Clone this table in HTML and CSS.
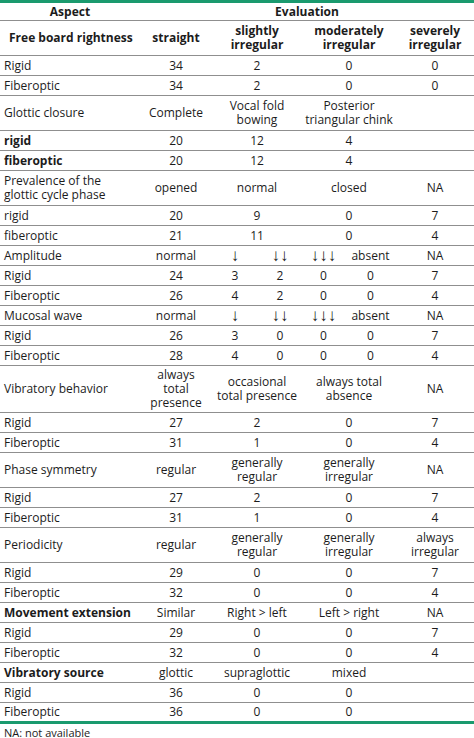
FILE: index.html
```html
<!DOCTYPE html>
<html>
<head>
<meta charset="utf-8">
<link rel="stylesheet" href="styles.css">
</head>
<body>
<div class="wrap">
<table class="tbl">
<colgroup>
<col class="c1"><col class="c2"><col class="ca"><col class="cb"><col class="cc"><col class="cd"><col class="ce">
</colgroup>
<thead>
<tr class="h1"><th class="asp">Aspect</th><th colspan="6">Evaluation</th></tr>
<tr class="h2"><th class="lbl">Free board rightness</th><th>straight</th><th colspan="2">slightly<br>irregular</th><th colspan="2">moderately<br>irregular</th><th>severely<br>irregular</th></tr>
</thead>
<tbody>
<tr class="s"><td class="lbl">Rigid</td><td>34</td><td colspan="2">2</td><td colspan="2">0</td><td>0</td></tr>
<tr class="s"><td class="lbl">Fiberoptic</td><td>34</td><td colspan="2">2</td><td colspan="2">0</td><td>0</td></tr>
<tr class="d"><td class="lbl">Glottic closure</td><td>Complete</td><td colspan="2">Vocal fold<br>bowing</td><td colspan="2">Posterior<br>triangular chink</td><td></td></tr>
<tr class="s"><td class="lbl b">rigid</td><td>20</td><td colspan="2">12</td><td colspan="2">4</td><td></td></tr>
<tr class="s"><td class="lbl b">fiberoptic</td><td>20</td><td colspan="2">12</td><td colspan="2">4</td><td></td></tr>
<tr class="d"><td class="lbl">Prevalence of the<br>glottic cycle phase</td><td>opened</td><td colspan="2">normal</td><td colspan="2">closed</td><td>NA</td></tr>
<tr class="s"><td class="lbl">rigid</td><td>20</td><td colspan="2">9</td><td colspan="2">0</td><td>7</td></tr>
<tr class="s"><td class="lbl">fiberoptic</td><td>21</td><td colspan="2">11</td><td colspan="2">0</td><td>4</td></tr>
<tr class="s"><td class="lbl">Amplitude</td><td>normal</td><td class="ar">↓</td><td class="ar">↓↓</td><td class="ar">↓↓↓</td><td>absent</td><td>NA</td></tr>
<tr class="s"><td class="lbl">Rigid</td><td>24</td><td>3</td><td>2</td><td>0</td><td>0</td><td>7</td></tr>
<tr class="s"><td class="lbl">Fiberoptic</td><td>26</td><td>4</td><td>2</td><td>0</td><td>0</td><td>4</td></tr>
<tr class="s"><td class="lbl">Mucosal wave</td><td>normal</td><td class="ar">↓</td><td class="ar">↓↓</td><td class="ar">↓↓↓</td><td>absent</td><td>NA</td></tr>
<tr class="s"><td class="lbl">Rigid</td><td>26</td><td>3</td><td>0</td><td>0</td><td>0</td><td>7</td></tr>
<tr class="s"><td class="lbl">Fiberoptic</td><td>28</td><td>4</td><td>0</td><td>0</td><td>0</td><td>4</td></tr>
<tr class="t"><td class="lbl">Vibratory behavior</td><td>always<br>total<br>presence</td><td colspan="2">occasional<br>total presence</td><td colspan="2">always total<br>absence</td><td>NA</td></tr>
<tr class="s"><td class="lbl">Rigid</td><td>27</td><td colspan="2">2</td><td colspan="2">0</td><td>7</td></tr>
<tr class="s"><td class="lbl">Fiberoptic</td><td>31</td><td colspan="2">1</td><td colspan="2">0</td><td>4</td></tr>
<tr class="d"><td class="lbl">Phase symmetry</td><td>regular</td><td colspan="2">generally<br>regular</td><td colspan="2">generally<br>irregular</td><td>NA</td></tr>
<tr class="s"><td class="lbl">Rigid</td><td>27</td><td colspan="2">2</td><td colspan="2">0</td><td>7</td></tr>
<tr class="s"><td class="lbl">Fiberoptic</td><td>31</td><td colspan="2">1</td><td colspan="2">0</td><td>4</td></tr>
<tr class="d"><td class="lbl">Periodicity</td><td>regular</td><td colspan="2">generally<br>regular</td><td colspan="2">generally<br>irregular</td><td>always<br>irregular</td></tr>
<tr class="s"><td class="lbl">Rigid</td><td>29</td><td colspan="2">0</td><td colspan="2">0</td><td>7</td></tr>
<tr class="s"><td class="lbl">Fiberoptic</td><td>32</td><td colspan="2">0</td><td colspan="2">0</td><td>4</td></tr>
<tr class="s"><td class="lbl b">Movement extension</td><td>Similar</td><td colspan="2">Right &gt; left</td><td colspan="2">Left &gt; right</td><td>NA</td></tr>
<tr class="s"><td class="lbl">Rigid</td><td>29</td><td colspan="2">0</td><td colspan="2">0</td><td>7</td></tr>
<tr class="s"><td class="lbl">Fiberoptic</td><td>32</td><td colspan="2">0</td><td colspan="2">0</td><td>4</td></tr>
<tr class="s"><td class="lbl b">Vibratory source</td><td>glottic</td><td colspan="2">supraglottic</td><td colspan="2">mixed</td><td></td></tr>
<tr class="s"><td class="lbl">Rigid</td><td>36</td><td colspan="2">0</td><td colspan="2">0</td><td></td></tr>
<tr class="s last"><td class="lbl">Fiberoptic</td><td>36</td><td colspan="2">0</td><td colspan="2">0</td><td></td></tr>
</tbody>
</table>
<p class="note">NA: not available</p>
</div>
</body>
</html>
```
FILE: styles.css
```css
html, body {
  margin: 0;
  padding: 0;
  background: #ffffff;
}
.wrap {
  width: 474px;
  font-family: "Open Sans", "Noto Sans", sans-serif;
  color: #1c1c1c;
  font-size: 12px;
}
.tbl {
  width: 474px;
  border-collapse: collapse;
  table-layout: fixed;
  border-top: 3px solid #1a9a6e;
  border-bottom: 3px solid #1a9a6e;
}
.c1 { width: 140px; }
.c2 { width: 72px; }
.ca { width: 46px; }
.cb { width: 44px; }
.cc { width: 43px; }
.cd { width: 51px; }
.ce { width: 78px; }
th, td {
  padding: 0 2px;
  text-align: center;
  vertical-align: middle;
  line-height: 14px;
  border-bottom: 1px solid #8f8f8f;
  white-space: nowrap;
}
th { font-weight: 700; }
.lbl { text-align: left; padding-left: 4px; }
.asp { text-align: center; }
.b { font-weight: 700; }
.ar {
  font-family: "Liberation Sans", "DejaVu Sans", sans-serif;
  font-size: 17px;
  letter-spacing: 0;
}
.h1 { height: 19px; }
.h2 { height: 35px; }
.h2 .lbl { padding-left: 9px; }
.s { height: 20px; }
.d { height: 35px; }
.t { height: 47px; }
.last td { border-bottom: none; }
.note {
  margin: 2px 0 0 4px;
  font-size: 11px;
  line-height: 14px;
}
```
